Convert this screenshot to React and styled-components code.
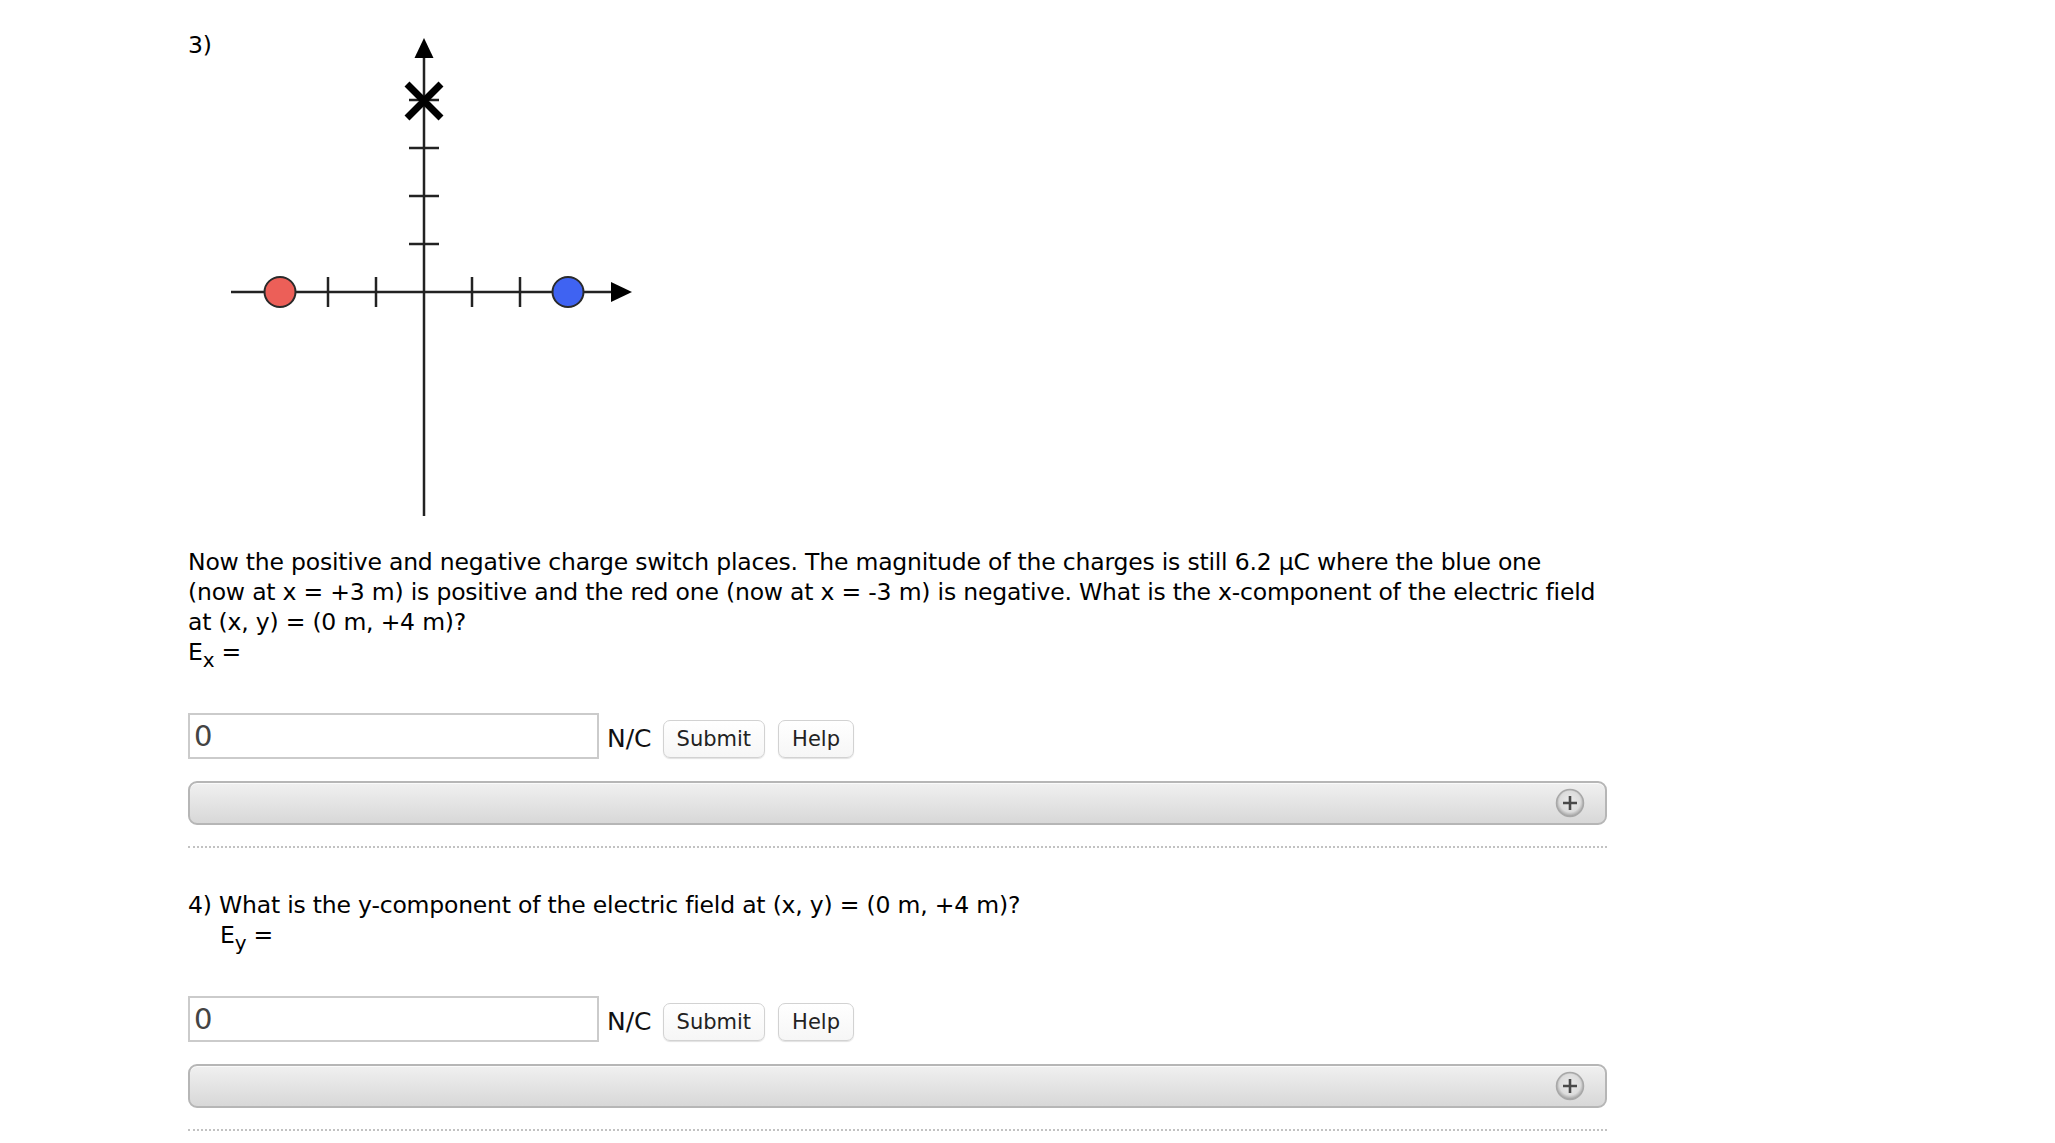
import React from 'react';
import styled, { createGlobalStyle } from 'styled-components';

const GlobalStyle = createGlobalStyle`
  body {
    margin: 0;
    background: #fff;
    color: #000;
    font-family: "DejaVu Sans", Verdana, sans-serif;
  }
`;

const Page = styled.div`
  width: 1419px;
  padding: 30px 0 0 188px;
`;

const Text = styled.div`
  font-size: 23.5px;
  letter-spacing: -0.2px;
  line-height: 30px;
  white-space: nowrap;
  margin-top: ${p => p.$top || 0}px;
  padding-left: ${p => p.$indent || 0}px;
`;

const Header = styled.div`
  display: flex;
  align-items: flex-start;
  height: 490px;
`;

const Num = styled(Text)`
  width: 32px;
`;

const GraphSvg = styled.svg`
  margin-top: 3px;
`;

const Sub = styled.span`
  font-size: 20px;
  position: relative;
  top: 7px;
  line-height: 0;
`;

const Row = styled.div`
  display: flex;
  align-items: center;
  margin-top: ${p => p.$top}px;
`;

const Input = styled.input`
  box-sizing: border-box;
  width: 411px;
  height: 46px;
  border: 2px solid #cbcbcb;
  padding: 0 4px;
  font-family: "DejaVu Sans", sans-serif;
  font-size: 29px;
  color: #444;
  outline: none;
`;

const Unit = styled.span`
  font-size: 25px;
  margin: 5px 11px 0 8px;
  color: #111;
`;

const Button = styled.button`
  height: 38px;
  padding: 0 13px;
  margin: 6px 13px 0 0;
  border: 1px solid #d2d2d2;
  border-radius: 7px;
  background: linear-gradient(#ffffff, #f6f6f6);
  box-shadow: 0 1px 1px rgba(0, 0, 0, 0.12);
  font-family: "DejaVu Sans", sans-serif;
  font-size: 21px;
  color: #222;
`;

const Bar = styled.div`
  box-sizing: border-box;
  height: 44px;
  margin-top: 22px;
  border: 2px solid #b6b6b6;
  border-radius: 9px;
  background: linear-gradient(#f0f0f0, #d8d8d8);
  box-shadow: inset 0 1px 0 #fafafa;
  display: flex;
  align-items: center;
  justify-content: flex-end;
  padding-right: 20px;
`;

const Divider = styled.div`
  margin-top: 21px;
  border-top: 2px dotted #c2c2c2;
`;

const PlusIcon = () => (
  <svg width="30" height="30" viewBox="0 0 30 30">
    <defs>
      <radialGradient id="pg" cx="50%" cy="45%" r="55%">
        <stop offset="0%" stopColor="#ececec" />
        <stop offset="70%" stopColor="#dcdcdc" />
        <stop offset="100%" stopColor="#9d9d9d" />
      </radialGradient>
    </defs>
    <circle cx="15" cy="15" r="13.5" fill="url(#pg)" stroke="#a8a8a8" strokeWidth="1.5" />
    <path d="M15 8v14M8 15h14" stroke="#4a4a4a" strokeWidth="2.6" />
  </svg>
);

const Graph = () => {
  const ax = '#222';
  return (
    <GraphSvg width="440" height="487" viewBox="220 32 440 487">
      <line x1="424" y1="50" x2="424" y2="515" stroke={ax} strokeWidth="2.5" />
      <polygon points="424,37 414.5,57 433.5,57" fill="#000" />
      <line x1="231" y1="291" x2="615" y2="291" stroke={ax} strokeWidth="2.5" />
      <polygon points="632,291 611,281 611,301" fill="#000" />
      {[328, 376, 472, 520].map(x => (
        <line key={x} x1={x} y1="276" x2={x} y2="306" stroke={ax} strokeWidth="2.5" />
      ))}
      {[243, 195, 147, 99].map(y => (
        <line key={y} x1="409" y1={y} x2="439" y2={y} stroke={ax} strokeWidth="2.5" />
      ))}
      <path d="M407 83L441 117M441 83L407 117" stroke="#000" strokeWidth="7" />
      <ellipse cx="280" cy="291" rx="15.5" ry="15" fill="#ec5f58" stroke="#2a2a2a" strokeWidth="2" />
      <ellipse cx="568" cy="291" rx="15.5" ry="15" fill="#3f63f2" stroke="#2a2a2a" strokeWidth="2" />
    </GraphSvg>
  );
};

const Answer = ({ top }) => (
  <>
    <Row $top={top}>
      <Input defaultValue="0" />
      <Unit>N/C</Unit>
      <Button>Submit</Button>
      <Button>Help</Button>
    </Row>
    <Bar>
      <PlusIcon />
    </Bar>
    <Divider />
  </>
);

export default function App() {
  return (
    <Page>
      <GlobalStyle />
      <Header>
        <Num>3)</Num>
        <Graph />
      </Header>
      <Text $top={27}>
        Now the positive and negative charge switch places. The magnitude of the charges is still 6.2 μC where the blue one<br />
        (now at x = +3 m) is positive and the red one (now at x = -3 m) is negative. What is the x-component of the electric field<br />
        at (x, y) = (0 m, +4 m)?<br />
        E<Sub>x</Sub> =
      </Text>
      <Answer top={46} />

      <Text $top={42}>4) What is the y-component of the electric field at (x, y) = (0 m, +4 m)?</Text>
      <Text $indent={32}>
        E<Sub>y</Sub> =
      </Text>
      <Answer top={46} />
    </Page>
  );
}
